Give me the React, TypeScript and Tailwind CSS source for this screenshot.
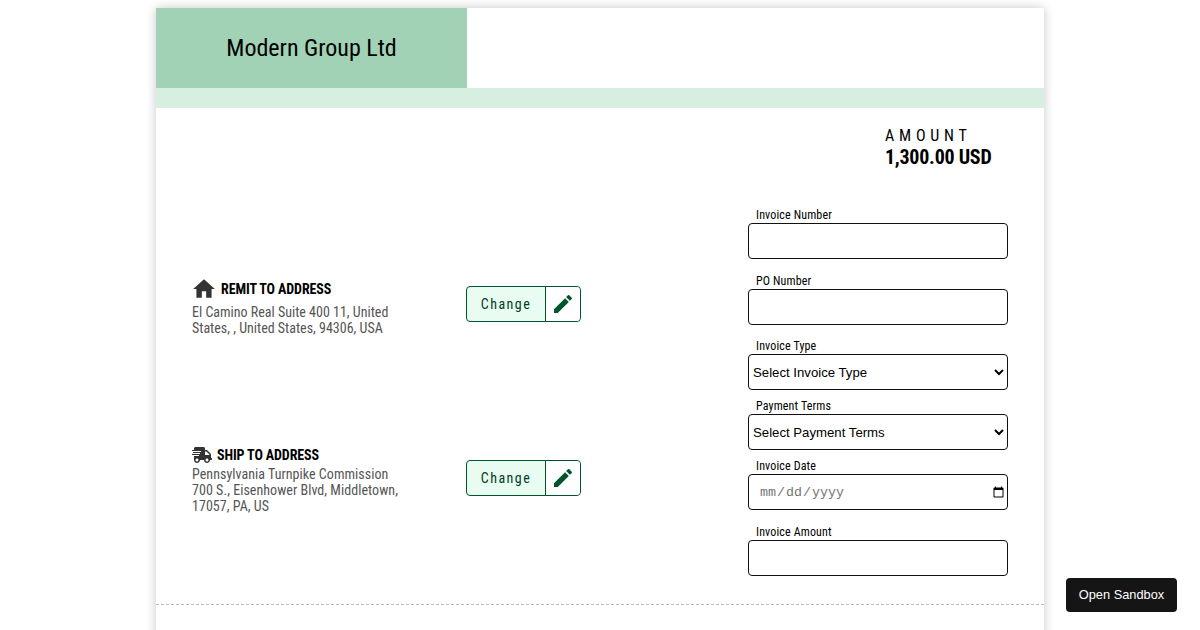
import { MdHome, MdEdit } from "react-icons/md"
import { FaShippingFast } from "react-icons/fa"

const condensed = "font-['Roboto_Condensed','Roboto',sans-serif] [font-stretch:75%]"

function ChangeButton() {
  return (
    <button className={`flex h-9 w-[115px] items-stretch rounded-[4px] border border-[#00552c] bg-[#e9fcf1] text-[#00552c] ${condensed}`}>
      <span className="flex w-[79px] items-center justify-center border-r border-[#00552c] text-sm font-[375] tracking-[1.45px] text-[#003d1f]">Change</span>
      <span className="flex flex-1 items-center justify-center rounded-r-[4px] bg-white">
        <MdEdit className="h-6 w-6" />
      </span>
    </button>
  )
}

function Label({ children }: { children: string }) {
  return <label className={`block h-[15px] pl-2 text-xs leading-[14px] tracking-[0.14px] text-black ${condensed}`}>{children}</label>
}

const fieldClass = "block h-9 w-[260px] rounded-[4px] border border-[#111] bg-white"
const textClass = "font-['Liberation_Sans',sans-serif] text-[13.2px] text-black"

export default function App() {
  return (
    <div className="relative h-[630px] overflow-hidden bg-white">
      <div className={`mx-auto mt-2 h-[640px] w-[888px] bg-white shadow-[0_0_10px_rgba(0,0,0,0.22)] ${condensed}`}>
        {/* Header */}
        <div className="flex h-20">
          <div className="flex w-[311px] items-center justify-center bg-[#a2d2b5] text-2xl text-black">Modern Group Ltd</div>
        </div>
        <div className="h-5 bg-[#d6efe0]" />

        <div className="flex h-[497px] border-b border-dashed border-[#bbb]">
          {/* Addresses */}
          <div className="w-[592px] pl-9 pt-[169px]">
            <div className="flex">
              <div className="w-[274px]">
                <div className="flex h-6 items-center text-sm font-bold tracking-[-0.1px] text-black">
                  <MdHome className="mr-1 ml-[-1px] h-[26px] w-[26px] shrink-0 text-[#333]" />
                  REMIT TO ADDRESS
                </div>
                <p className="mt-[3px] w-[210px] text-sm leading-4 text-[#555]">El Camino Real Suite 400 11, United States, , United States, 94306, USA</p>
              </div>
              <div className="pt-[9px]"><ChangeButton /></div>
            </div>

            <div className="mt-[109px] flex">
              <div className="w-[274px]">
                <div className="flex h-5 items-center text-sm font-bold tracking-[-0.12px] text-black">
                  <FaShippingFast className="mr-[5px] h-5 w-5 shrink-0 text-[#333]" />
                  SHIP TO ADDRESS
                </div>
                <p className="mt-[1px] w-[215px] text-sm leading-4 tracking-[0.04px] text-[#555]">Pennsylvania Turnpike Commission 700 S., Eisenhower Blvd, Middletown, 17057, PA, US</p>
              </div>
              <div className="pt-[15px]"><ChangeButton /></div>
            </div>
          </div>

          {/* Amount and form */}
          <div className="w-[260px]">
            <div className="ml-[137px] mt-[19px] h-[81px]">
              <div className="text-base leading-[18px] tracking-[0.3em] text-black">AMOUNT</div>
              <div className="whitespace-nowrap text-xl font-bold leading-6 tracking-[-0.25px] text-black">1,300.00 USD</div>
            </div>
            <Label>Invoice Number</Label>
            <input className={`${fieldClass} mb-[15px]`} />
            <Label>PO Number</Label>
            <input className={`${fieldClass} mb-[14px]`} />
            <Label>Invoice Type</Label>
            <select className={`${fieldClass} ${textClass} mb-[9px]`}><option>Select Invoice Type</option></select>
            <Label>Payment Terms</Label>
            <select className={`${fieldClass} ${textClass} mb-[9px]`}><option>Select Payment Terms</option></select>
            <Label>Invoice Date</Label>
            <input type="date" className={`${fieldClass} mb-[15px] pl-[10px] pt-[2px] font-['Liberation_Mono',monospace] text-[13.33px] text-[#757575]`} />
            <Label>Invoice Amount</Label>
            <input className={fieldClass} />
          </div>
        </div>
      </div>

      <button className="absolute left-[1066px] top-[578px] h-[34px] w-[111px] rounded-[4px] bg-[#151515] font-['Liberation_Sans',sans-serif] text-[12.8px] text-white">Open Sandbox</button>
    </div>
  )
}
